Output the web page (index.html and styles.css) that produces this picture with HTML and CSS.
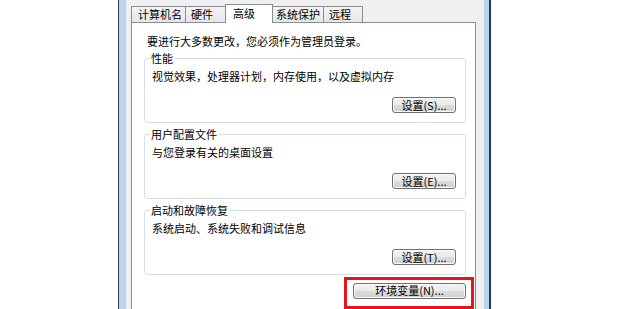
FILE: index.html
```html
<!DOCTYPE html>
<html lang="zh-CN">
<head>
<meta charset="utf-8">
<title>系统属性 - 高级</title>
<link rel="stylesheet" href="styles.css">
</head>
<body>
<div class="window">
  <div class="frame-edge"></div>
  <div class="dialog">
    <div class="tabs">
      <div class="tab tab-4">计算机名</div>
      <div class="tab tab-2">硬件</div>
      <div class="tab tab-active">高级</div>
      <div class="tab tab-4b">系统保护</div>
      <div class="tab tab-2">远程</div>
    </div>
    <div class="panel">
      <p class="intro">要进行大多数更改，您必须作为管理员登录。</p>
      <fieldset class="group">
        <legend class="group-title">性能</legend>
        <p class="desc">视觉效果，处理器计划，内存使用，以及虚拟内存</p>
        <div class="actions"><button class="btn">设置(S)...</button></div>
      </fieldset>
      <fieldset class="group">
        <legend class="group-title">用户配置文件</legend>
        <p class="desc">与您登录有关的桌面设置</p>
        <div class="actions"><button class="btn">设置(E)...</button></div>
      </fieldset>
      <fieldset class="group">
        <legend class="group-title">启动和故障恢复</legend>
        <p class="desc">系统启动、系统失败和调试信息</p>
        <div class="actions"><button class="btn">设置(T)...</button></div>
      </fieldset>
      <div class="env-row">
        <div class="env-wrap">
          <button class="btn btn-env">环境变量(N)...</button>
          <div class="highlight"></div>
        </div>
      </div>
    </div>
  </div>
  <div class="frame-edge frame-right"></div>
</div>
</body>
</html>
```

FILE: styles.css
```css
html, body {
  margin: 0;
  padding: 0;
}
body {
  width: 620px;
  height: 309px;
  overflow: hidden;
  background: #ffffff;
  font-family: "Noto Sans CJK SC", "Noto Sans", sans-serif;
  font-size: 11px;
  color: #000000;
}
.window {
  display: flex;
  margin-left: 118px;
  width: 373px;
  height: 309px;
}
.frame-edge {
  width: 7px;
  border-left: 1px solid #3b3f46;
  border-right: 1px solid #e6edf5;
  background: #bcd3ee;
}
.frame-right {
  width: 5px;
  border-left: 0;
  border-right: 2px solid #1d3a64;
}
.dialog {
  flex: 1;
  background: #f0f0f0;
  padding: 6px 8px 0 4px;
  display: flex;
  flex-direction: column;
}
.tabs {
  display: flex;
  align-items: flex-end;
  height: 16px;
}
.tab {
  box-sizing: border-box;
  height: 16px;
  border: 1px solid #898c95;
  border-bottom: 0;
  border-right: 0;
  background: linear-gradient(#f4f4f4, #e6e6e6);
  line-height: 15px;
  padding-left: 5px;
  white-space: nowrap;
}
.tab-4 { width: 54px; padding-left: 6px; }
.tab-2 { width: 40px; }
.tab-4b { width: 50px; padding-left: 3px; }
.tab-2:last-child { border-right: 1px solid #898c95; }
.tab-active {
  position: relative;
  z-index: 1;
  width: 48px;
  height: 19px;
  margin-bottom: -1px;
  background: #ffffff;
  border-right: 1px solid #898c95;
  padding-left: 7px;
  line-height: 17px;
}
.tab-active + .tab { border-left: 0; }
.panel {
  flex: 1;
  background: #ffffff;
  border: 1px solid #898c95;
  border-bottom: 0;
  padding: 0 9px 0 12px;
  display: flex;
  flex-direction: column;
}
.intro {
  margin: 11px 0 0 3px;
  line-height: 14px;
}
.group {
  margin: 3px 0 0 0;
  padding: 0 9px 9px 7px;
  border: 1px solid #d5dfe5;
  border-radius: 3px;
  min-width: 0;
}
.group + .group { margin-top: 4px; }
.group-title {
  padding: 0 1px;
  margin-left: -2px;
  line-height: 14px;
}
.desc {
  margin: 4px 0 0 0;
  line-height: 14px;
}
.actions {
  display: flex;
  justify-content: flex-end;
  margin-top: 14px;
}
.btn {
  font: inherit;
  color: #000000;
  height: 16px;
  width: 64px;
  padding: 0;
  border: 1px solid #707070;
  border-radius: 3px;
  background: linear-gradient(#f2f2f2 0%, #ebebeb 50%, #dddddd 50%, #cfcfcf 100%);
  box-shadow: inset 0 0 0 1px #fbfbfb;
  line-height: 13px;
}
.env-row {
  display: flex;
  justify-content: flex-end;
  margin-top: 7px;
}
.env-wrap {
  position: relative;
}
.btn-env {
  width: 113px;
}
.highlight {
  position: absolute;
  left: -9px;
  top: -5px;
  width: 124px;
  height: 26px;
  border: 3px solid #e8141b;
}
```
